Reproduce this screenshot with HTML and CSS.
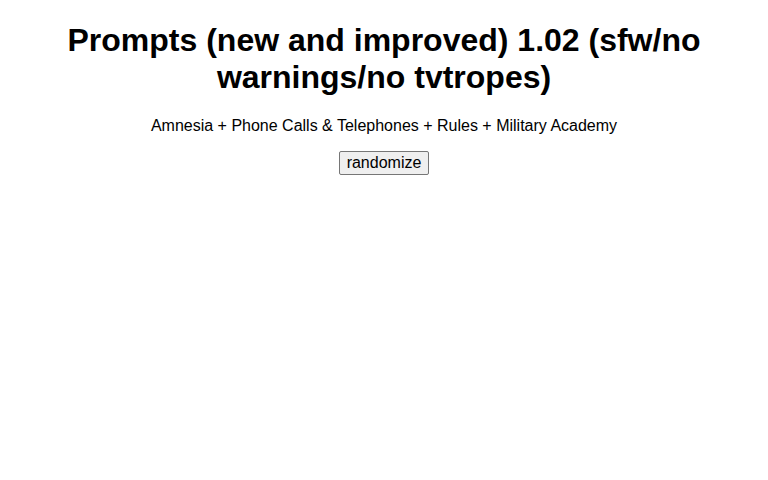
FILE: index.html
```html
<!DOCTYPE html>
<html>
<head>
<meta charset="utf-8">
<title>Prompts</title>
<link rel="stylesheet" href="styles.css">
</head>
<body>
<div class="page">
  <h1 class="title">Prompts (new and improved) 1.02 (sfw/no warnings/no tvtropes)</h1>
  <p class="prompt">Amnesia + Phone Calls &amp; Telephones + Rules + Military Academy</p>
  <p class="actions"><button class="randomize" type="button">randomize</button></p>
</div>
</body>
</html>
```

FILE: styles.css
```css
body {
  margin: 0 8px 8px;
  font-family: "Liberation Sans", Arial, sans-serif;
  color: #000;
  background: #fff;
}

.page {
  text-align: center;
}

.title {
  font-size: 32px;
  font-weight: bold;
  line-height: 37px;
  margin: 22px 0 21.44px;
}

.prompt {
  font-size: 16px;
  margin: 16px 0;
}

.actions {
  margin: 16px 0;
}

.randomize {
  font-family: "Liberation Sans", Arial, sans-serif;
  font-size: 16px;
  color: #000;
  background: #efefef;
  border: 1px solid #767676;
  border-radius: 2px;
  padding: 2px 7px;
}
```
